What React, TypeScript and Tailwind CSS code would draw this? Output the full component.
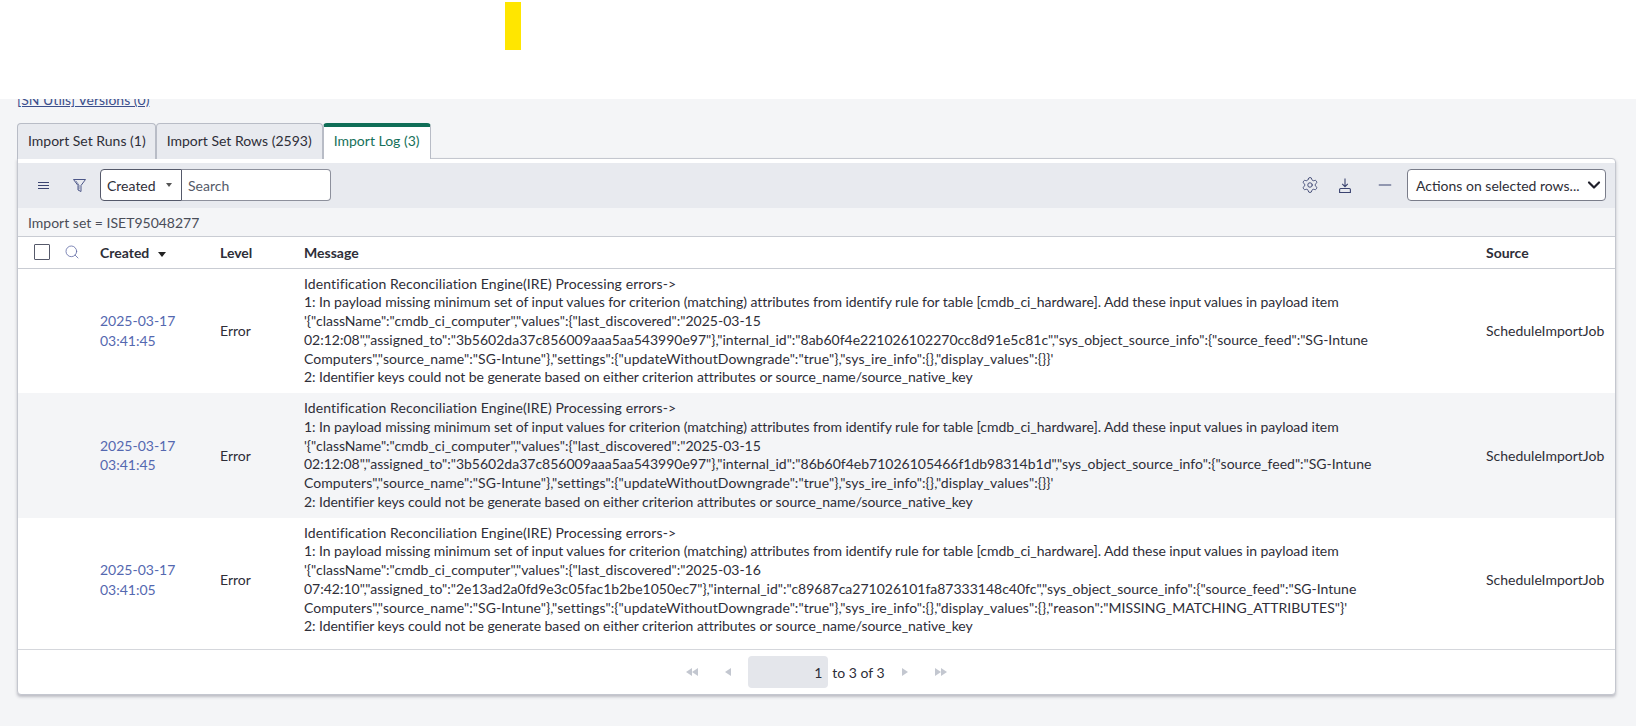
import React from 'react';
import { ChevronDown, Minus, Search, Settings } from 'lucide-react';

interface LogRow {
  date: string;
  time: string;
  lines: string[];
}

const head = 'Identification Reconciliation Engine(IRE) Processing errors->';
const rule =
  '1: In payload missing minimum set of input values for criterion (matching) attributes from identify rule for table [cmdb_ci_hardware]. Add these input values in payload item';
const tail = '2: Identifier keys could not be generate based on either criterion attributes or source_name/source_native_key';

const rows: LogRow[] = [
  {
    date: '2025-03-17',
    time: '03:41:45',
    lines: [
      head,
      rule,
      `'{"className":"cmdb_ci_computer","values":{"last_discovered":"2025-03-15`,
      `02:12:08","assigned_to":"3b5602da37c856009aaa5aa543990e97"},"internal_id":"8ab60f4e221026102270cc8d91e5c81c","sys_object_source_info":{"source_feed":"SG-Intune`,
      `Computers","source_name":"SG-Intune"},"settings":{"updateWithoutDowngrade":"true"},"sys_ire_info":{},"display_values":{}}'`,
      tail,
    ],
  },
  {
    date: '2025-03-17',
    time: '03:41:45',
    lines: [
      head,
      rule,
      `'{"className":"cmdb_ci_computer","values":{"last_discovered":"2025-03-15`,
      `02:12:08","assigned_to":"3b5602da37c856009aaa5aa543990e97"},"internal_id":"86b60f4eb71026105466f1db98314b1d","sys_object_source_info":{"source_feed":"SG-Intune`,
      `Computers","source_name":"SG-Intune"},"settings":{"updateWithoutDowngrade":"true"},"sys_ire_info":{},"display_values":{}}'`,
      tail,
    ],
  },
  {
    date: '2025-03-17',
    time: '03:41:05',
    lines: [
      head,
      rule,
      `'{"className":"cmdb_ci_computer","values":{"last_discovered":"2025-03-16`,
      `07:42:10","assigned_to":"2e13ad2a0fd9e3c05fac1b2be1050ec7"},"internal_id":"c89687ca271026101fa87333148c40fc","sys_object_source_info":{"source_feed":"SG-Intune`,
      `Computers","source_name":"SG-Intune"},"settings":{"updateWithoutDowngrade":"true"},"sys_ire_info":{},"display_values":{},"reason":"MISSING_MATCHING_ATTRIBUTES"}'`,
      tail,
    ],
  },
];

// small width corrections per message line
const lineTracking = [
  'tracking-[0.1px]',
  'tracking-[-0.05px]',
  '',
  '',
  'tracking-[0.05px]',
  'tracking-[-0.05px]',
];

const MenuIcon = () => (
  <svg width="11" height="7" viewBox="0 0 11 7" stroke="#3b4470" strokeWidth="1">
    <path d="M0 .5h11M0 3.500h11M0 6.500h11" />
  </svg>
);

const FilterIcon = () => (
  <svg width="13" height="13" viewBox="0 0 13 13" fill="none" stroke="#4c5788" strokeWidth="1">
    <path d="M.5.5h12L8 6.500v6l-3-1.500V6.500z" strokeLinejoin="round" />
    <path d="M2.800 1.800 6 6.200v4.200" strokeWidth="0.700" />
  </svg>
);

const ExportIcon = () => (
  <svg width="12" height="15" viewBox="0 0 12 15" fill="none" stroke="#3b4470" strokeWidth="1.100">
    <path d="M6 .5v8M3.200 5.800 6 8.600l2.800-2.800" />
    <path d="M.6 14.500V11.500a1 1 0 0 1 1-1h8.800a1 1 0 0 1 1 1v3z" />
  </svg>
);

const Triangle = ({ flip }: { flip?: boolean }) => (
  <svg width="6" height="8" viewBox="0 0 6 8" className={flip ? 'rotate-180' : ''}>
    <path d="M6 0v8L0 4z" fill="#c3c7d0" />
  </svg>
);

export default function App() {
  return (
    <div className="h-[726px] overflow-hidden bg-[#f4f5f7] font-['Lato',sans-serif] text-[14px] text-[#2e2e38]">
      <header className="relative z-10 h-[99px] bg-white pt-[2px] pl-[505px]">
        <div className="h-[48px] w-[16px] bg-[#ffe600]" />
      </header>

      <main className="px-[17px]">
        <a href="#" className="-mt-[9px] block leading-[19px] text-[#3c4f8c] underline">
          [SN Utils] Versions (0)
        </a>

        <div className="mt-[14px] flex h-[36px] items-stretch">
          <div className="flex items-center rounded-t-[4px] border border-b-0 border-[#b8bcc6] bg-[#e8eaef] pr-[9px] pb-[2px] pl-[10px]">
            Import Set Runs (1)
          </div>
          <div className="flex items-center rounded-t-[4px] border border-b-0 border-[#b8bcc6] bg-[#e8eaef] px-[10px] pb-[2px]">
            Import Set Rows (2593)
          </div>
          <div className="z-10 flex items-center rounded-t-[4px] border-x border-t-[4px] border-x-[#b8bcc6] border-t-[#0f6e57] bg-white px-[10px] pb-[5px] text-[#16715a]">
            Import Log (3)
          </div>
        </div>

        <section className="-mt-px w-[1599px] overflow-hidden rounded-b-[4px] rounded-tr-[4px] border border-[#c4c7cf] bg-white pt-[4px] shadow-[0_2px_3px_rgba(60,60,80,0.3)]">
          <div className="flex h-[45px] items-center bg-[#e8eaef] pr-[9px] pb-[1px] pl-[20px]">
            <MenuIcon />
            <span className="ml-[24px]"><FilterIcon /></span>
            <div className="ml-[14px] flex h-[32px]">
              <div className="flex w-[82px] items-center rounded-l-[4px] border border-[#55596a] bg-white pl-[6px]">
                Created
                <span className="ml-[10px] h-0 w-0 border-x-[3px] border-t-[4px] border-x-transparent border-t-[#555]" />
              </div>
              <div className="flex w-[149px] items-center rounded-r-[4px] border border-l-0 border-[#8d909c] bg-white pl-[6px] text-[#555a68]">
                Search
              </div>
            </div>
            <div className="ml-auto flex items-center">
              <Settings size={18} strokeWidth={1.2} color="#3b4470" />
              <span className="ml-[20px]"><ExportIcon /></span>
              <Minus size={20} strokeWidth={1.2} color="#3b4470" className="ml-[24px]" />
              <div className="ml-[12px] flex h-[32px] w-[199px] items-center justify-between rounded-[4px] border border-[#7a7d8a] bg-white pr-[1px] pl-[8px]">
                Actions on selected rows...
                <ChevronDown size={20} strokeWidth={2.6} color="#1f1f2a" />
              </div>
            </div>
          </div>

          <div className="flex h-[29px] items-center border-b border-[#c9ccd3] bg-[#f4f5f7] pl-[10px] text-[#4a4d58]">
            Import set = ISET95048277
          </div>

          <table className="w-full table-fixed border-collapse">
            <colgroup>
              <col className="w-[82px]" />
              <col className="w-[120px]" />
              <col className="w-[84px]" />
              <col className="w-[1182px]" />
              <col />
            </colgroup>
            <thead>
              <tr className="h-[31px] border-b border-[#c9ccd3] text-left font-bold">
                <th className="pl-[16px]">
                  <div className="flex items-center">
                    <span className="h-[16px] w-[16px] rounded-[1px] border border-[#55596a] bg-white" />
                    <Search size={16} strokeWidth={1.2} color="#5f6aa5" className="ml-[14px]" />
                  </div>
                </th>
                <th className="font-bold">
                  Created
                  <span className="ml-[9px] inline-block h-0 w-0 border-x-[4px] border-t-[5px] border-x-transparent border-t-[#222] align-middle" />
                </th>
                <th className="font-bold">Level</th>
                <th className="font-bold">Message</th>
                <th className="font-bold">Source</th>
              </tr>
            </thead>
            <tbody>
              {rows.map((row, i) => (
                <tr key={i} className={i === 1 ? 'bg-[#f4f5f7]' : 'bg-white'}>
                  <td />
                  <td className="leading-[19.500px] text-[#5468b0]">
                    {row.date}
                    <br />
                    {row.time}
                  </td>
                  <td>Error</td>
                  <td className="py-[6px] leading-[18.750px]">
                    {row.lines.map((line, j) => (
                      <div key={j} className={`whitespace-nowrap ${lineTracking[j]}`}>{line}</div>
                    ))}
                  </td>
                  <td>ScheduleImportJob</td>
                </tr>
              ))}
              <tr className="h-[7px]"><td colSpan={5} /></tr>
            </tbody>
          </table>

          <div className="flex h-[45px] items-center justify-center border-t border-[#d5d7dc]">
            <Triangle /><Triangle />
            <span className="ml-[27px]"><Triangle /></span>
            <div className="ml-[17px] flex h-[32px] w-[80px] items-center justify-end rounded-[4px] bg-[#e4e6eb] pr-[6px]">1</div>
            <span className="ml-[4px]">to 3 of 3</span>
            <span className="ml-[17px]"><Triangle flip /></span>
            <span className="ml-[27px]"><Triangle flip /></span>
            <Triangle flip />
          </div>
        </section>
      </main>
    </div>
  );
}
